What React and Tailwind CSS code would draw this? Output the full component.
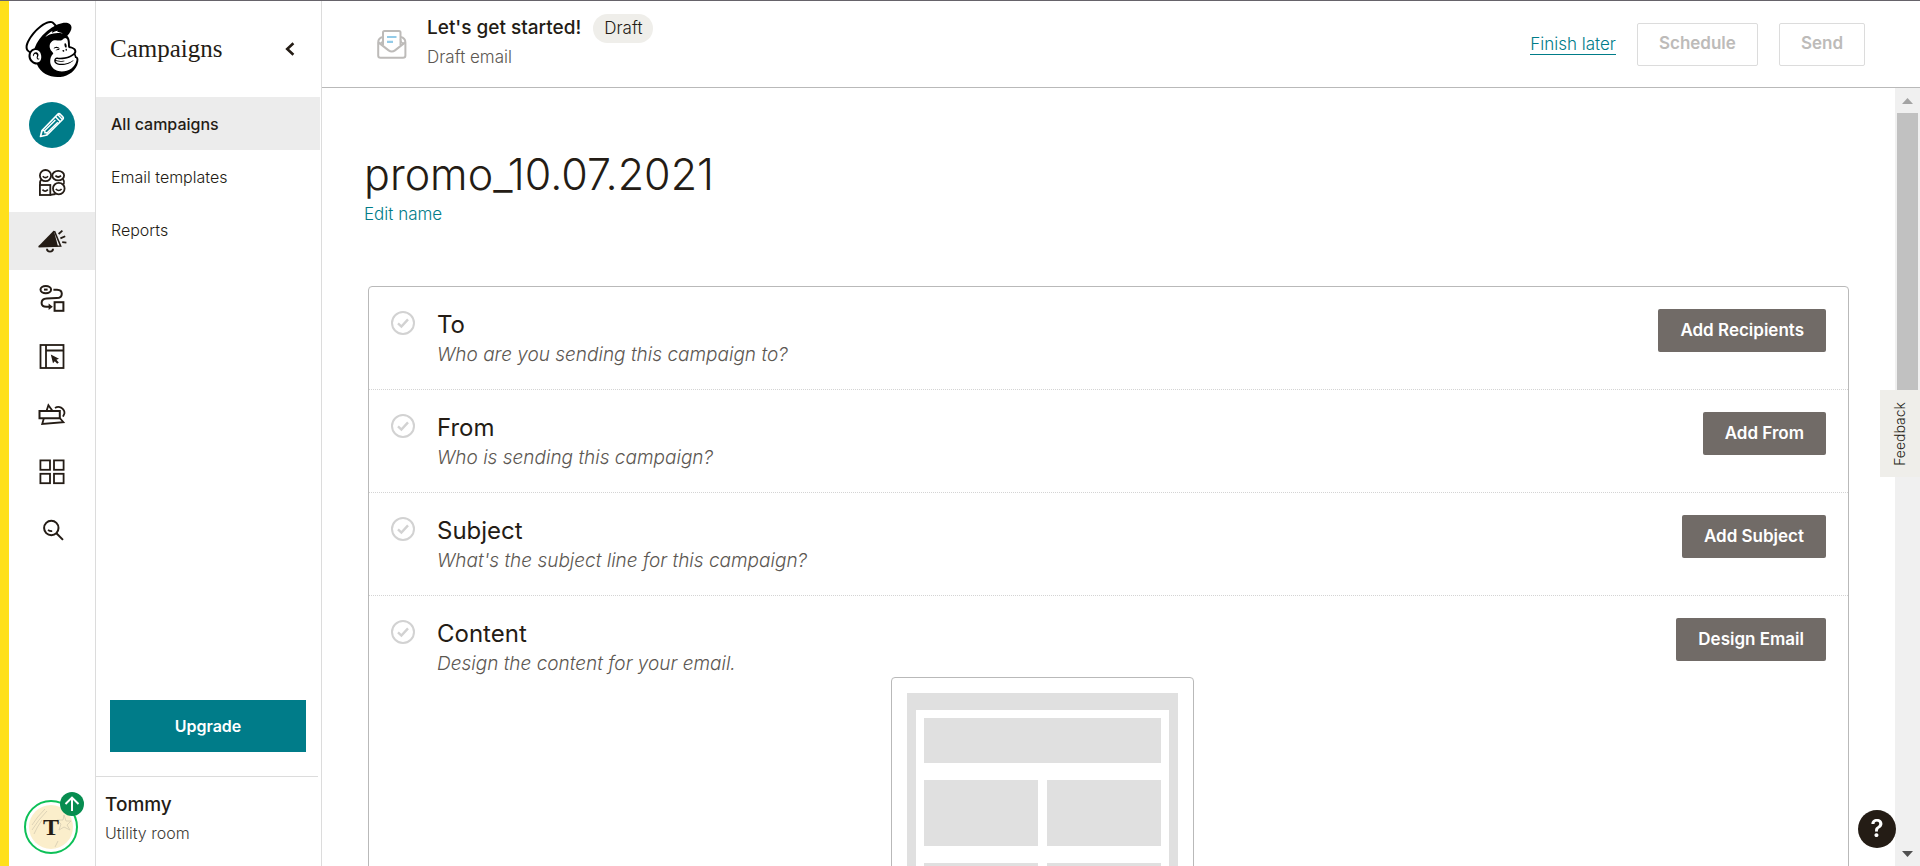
import React from 'react';
import { FaMailchimp } from 'react-icons/fa';

const NAV_LINKS = [
  { label: 'All campaigns', active: true },
  { label: 'Email templates' },
  { label: 'Reports' },
];

const STEPS = [
  { title: 'To',      hint: 'Who are you sending this campaign to?',      action: 'Add Recipients' },
  { title: 'From',    hint: 'Who is sending this campaign?',              action: 'Add From' },
  { title: 'Subject', hint: "What's the subject line for this campaign?", action: 'Add Subject' },
  { title: 'Content', hint: 'Design the content for your email.',         action: 'Design Email', preview: true },
];

function Icon({ children, size = 30, className = '' }) {
  return (
    <svg
      width={size}
      height={size}
      viewBox="0 0 30 30"
      fill="none"
      stroke="currentColor"
      strokeWidth="1.8"
      className={className}
      aria-hidden="true"
    >
      {children}
    </svg>
  );
}

function PencilIcon() {
  return (
    <Icon>
      <path d="M3.5 26.5 L5 20.5 L20.5 4.5 Q22 3 23.5 4.5 L25.5 6.5 Q27 8 25.5 9.5 L10 25 Z" strokeWidth="1.7" strokeLinejoin="round" />
      <path d="M18.5 6.8 L23.3 11.8 M20.6 4.6 L25.4 9.4 M7.8 20.6 L18.4 10 M10.2 22.8 L20.8 12.2 M5 20.5 L7.8 20.6 L7.9 22.8 L10.2 22.8 L10 25" strokeWidth="1.4" />
    </Icon>
  );
}

function AudienceIcon() {
  return (
    <Icon>
      <circle cx="8.5" cy="7.6" r="5.6" />
      <ellipse cx="21.2" cy="7.6" rx="5.9" ry="4.8" />
      <rect x="2.9" y="17" width="10.4" height="10" />
      <circle cx="21.8" cy="20.6" r="5.8" />
      <path d="M3.2 16.6 Q2.4 13.2 4.4 11.6 M26 11 Q27.6 13.2 26.8 16.2 M13.4 26.8 L18.6 26" />
      <path d="M5.8 8.2 Q8.5 11.2 11 8.2 M18.4 7.6 Q21.2 10.4 24 7.6 M5.4 21.6 Q8.2 24.6 10.8 21.6 M18.8 21 Q21.8 24 24.6 21" strokeWidth="1.7" />
    </Icon>
  );
}

function MegaphoneIcon() {
  return (
    <Icon>
      <path d="M1.2 20.6 L16.8 4.4 L21 20.6 Z" fill="currentColor" stroke="none" />
      <path d="M17.4 5 L23.6 20 L1.6 20.6" strokeWidth="1.6" />
      <path d="M10 22.8 Q10 25.6 13 25.6 Q16 25.6 16 22.8" strokeWidth="1.9" />
      <path d="M21.6 8 L25.4 4.6 M23.4 12.4 L28.2 10.2 M25.2 16.2 L29.4 16.6" />
    </Icon>
  );
}

function JourneyIcon() {
  return (
    <Icon>
      <ellipse cx="8.8" cy="5.6" rx="5.3" ry="3.7" strokeWidth="2" />
      <path d="M7 5.6 L10.6 5.6" strokeWidth="2" />
      <path d="M16.4 5.7 H20 Q24.8 5.9 24.8 9.7 Q24.8 13.9 19.6 14.1 L9.6 14.5 Q4.6 14.9 4.6 18.9 Q4.6 22.9 9.6 22.7 L13 22.7" strokeWidth="2" />
      <path d="M11.6 19.4 L15.8 22.7 L11.6 26 Z" fill="currentColor" stroke="none" />
      <rect x="17.6" y="18.2" width="8.8" height="8.6" strokeWidth="2" />
    </Icon>
  );
}

function WebsiteIcon() {
  return (
    <Icon>
      <rect x="3.5" y="3" width="23" height="23" />
      <path d="M9 3 V26 M9 8.5 H26.5" />
      <path d="M13.8 12.4 L22 16.8 L19.4 17.8 L21.8 20.6 L20.2 21.8 L17.8 19.2 L16 21.2 Z" fill="currentColor" stroke="none" />
    </Icon>
  );
}

function ContentIcon() {
  return (
    <Icon>
      <path d="M2.5 11 H22.8 V18.2 H2.5 Z" strokeWidth="2" />
      <path d="M9.6 10.8 L11.4 5.2 L15.4 10.8 M6.8 18.4 L5.2 24 L26.4 22.2 L22.8 18" />
      <path d="M18 8 Q21 6 24 7.6 Q28 10.2 27.4 13.6 L26 16.6" />
    </Icon>
  );
}

function IntegrationsIcon() {
  return (
    <Icon>
      <rect x="3.4" y="2.4" width="9.6" height="9.4" />
      <rect x="17" y="2.4" width="9.6" height="9.4" />
      <rect x="3.4" y="15.8" width="9.6" height="9.4" />
      <rect x="17" y="15.8" width="9.6" height="9.4" />
    </Icon>
  );
}

function SearchIcon() {
  return (
    <Icon>
      <circle cx="14.3" cy="12" r="7.2" strokeWidth="2" />
      <path d="M19.4 17.3 L26 23.9" strokeWidth="2" />
      <path d="M11 14.1 Q12.8 15.3 15.2 15.1" />
    </Icon>
  );
}

const RAIL_ITEMS = [
  { label: 'Audience',     Icon: AudienceIcon },
  { label: 'Campaigns',    Icon: MegaphoneIcon, active: true },
  { label: 'Automations',  Icon: JourneyIcon },
  { label: 'Website',      Icon: WebsiteIcon },
  { label: 'Content',      Icon: ContentIcon },
  { label: 'Integrations', Icon: IntegrationsIcon },
  { label: 'Search',       Icon: SearchIcon },
];

function EmailIcon() {
  return (
    <svg width="30" height="30" viewBox="0 0 30 30" fill="none" stroke="#bdbbb9" strokeWidth="2" strokeLinejoin="round" aria-hidden="true">
      <path d="M6 16 V3.5 Q6 2 7.5 2 H22 Q23.5 2 23.5 3.5 V16" />
      <path d="M6 8 Q1.2 9 1.2 13.4 V26.5 Q1.2 28.8 3.5 28.8 H26 Q28.4 28.8 28.4 26.5 V13.4 Q28.4 9 23.5 8" />
      <path d="M1.4 13.4 L11.6 21.4 Q14.8 23.8 18 21.4 L28.2 13.4" />
      <path d="M2 14.6 Q6 14.4 6 10 M27.6 14.6 Q23.5 14.4 23.5 10" strokeWidth="1.5" />
      <path d="M10 8 H19.5 M10 12.8 H16" stroke="#93cbe8" strokeWidth="2.2" />
    </svg>
  );
}

function Avatar() {
  return (
    <button aria-label="Account" className="relative flex size-[54px] items-center justify-center rounded-full border-2 border-[#0dc057] bg-white">
      <svg width="44" height="44" viewBox="0 0 44 44" aria-hidden="true">
        <circle cx="22" cy="22" r="22" fill="#fbeecb" />
        <g fill="none" stroke="#d9cfb4" strokeWidth="0.9">
          <path d="M3 20 Q8 12 16 4 M3 25 Q9 15 18 6 M5 29 Q8 22 13 15" />
          <path d="M35 10 L37 16 L42 16 L38 20 L41 25 L35 22 L30 25 L32 19 L28 15 L34 15 Z" />
          <path d="M26 42 L29 36" />
        </g>
      </svg>
      <span className="absolute font-['Liberation_Serif',serif] text-2xl font-bold text-[#241c15]">T</span>
      <span className="absolute -top-2.5 -right-2 flex size-6 items-center justify-center rounded-full bg-[#078d50]">
        <svg width="16" height="16" viewBox="0 0 16 16" fill="none" stroke="#fff" strokeWidth="2" aria-hidden="true">
          <path d="M8 15 V2 M1.5 8 L8 1.6 L14.5 8" />
        </svg>
      </span>
    </button>
  );
}

function Rail() {
  return (
    <nav aria-label="Main" className="flex w-[87px] shrink-0 flex-col items-center border-r border-[#dcdcdc]">
      <a href="#home" aria-label="Home" className="flex h-[95px] items-center">
        <FaMailchimp size={64} className="text-black" />
      </a>
      <div className="flex h-[58px] items-center">
        <button aria-label="Create" className="flex size-[46px] items-center justify-center rounded-full bg-[#007c89] text-white">
          <PencilIcon />
        </button>
      </div>
      {RAIL_ITEMS.map(({ label, Icon: ItemIcon, active }) => (
        <a
          key={label}
          href="#nav"
          aria-label={label}
          className={`flex h-[58px] w-full items-center justify-center ${active ? 'bg-[#ececec]' : ''}`}
        >
          <ItemIcon />
        </a>
      ))}
      <div className="mt-auto mr-0.5 mb-3">
        <Avatar />
      </div>
    </nav>
  );
}

function Sidebar() {
  return (
    <aside className="flex w-[226px] shrink-0 flex-col border-r border-[#dcdcdc]">
      <div className="flex h-[96px] items-center justify-between pr-[22px] pl-[14px]">
        <h2 className="font-['Liberation_Serif',serif] text-[25px]">Campaigns</h2>
        <button aria-label="Collapse menu" className="p-1">
          <svg width="10" height="14" viewBox="0 0 10 14" fill="none" stroke="currentColor" strokeWidth="2.6" aria-hidden="true">
            <path d="M8.4 1.2 L2.2 7 L8.4 12.8" />
          </svg>
        </button>
      </div>
      {NAV_LINKS.map(link => (
        <a
          key={link.label}
          href="#section"
          className={`mr-px flex h-[53px] items-center pl-[15px] text-base ${link.active ? 'bg-[#ececec] font-medium' : 'font-light'}`}
        >
          {link.label}
        </a>
      ))}
      <div className="mt-auto pr-[15px] pb-6 pl-[14px]">
        <button className="h-[52px] w-full bg-[#007c89] text-base font-semibold text-white">Upgrade</button>
      </div>
      <div className="mr-[3px] h-[90px] border-t border-[#dcdcdc] pt-3.5 pl-[9px]">
        <p className="text-[19px] leading-7 font-medium">Tommy</p>
        <p className="text-base leading-7 font-light text-[#403b36]">Utility room</p>
      </div>
    </aside>
  );
}

function Header() {
  return (
    <header className="flex h-[87px] shrink-0 items-center border-b border-[#b9b9b9] pr-[55px] pl-[55px]">
      <EmailIcon />
      <div className="ml-5 pb-1">
        <div className="flex items-center gap-3">
          <h1 className="text-[19px] font-medium">Let's get started!</h1>
          <span className="rounded-full bg-[#efeeea] px-[11px] py-1 text-[17px] leading-[21px] font-light">Draft</span>
        </div>
        <p className="text-[17px] leading-7 font-light text-[#5c5752]">Draft email</p>
      </div>
      <div className="ml-auto flex items-center gap-[21px]">
        <a href="#later" className="border-b border-[#007c89] text-[17px] leading-5 font-light text-[#007c89]">Finish later</a>
        <button disabled className="h-[43px] rounded-xs border border-[#dcdcdc] px-[21px] text-[17px] font-semibold text-[#bdbbb9]">Schedule</button>
        <button disabled className="h-[43px] rounded-xs border border-[#dcdcdc] px-[21px] text-[17px] font-semibold text-[#bdbbb9]">Send</button>
      </div>
    </header>
  );
}

function EmailPreview() {
  return (
    <div className="mx-auto w-[303px] rounded border border-[#b9b9b9] p-[15px]">
      <div className="bg-[#e0e0e0] px-[9px] pt-[17px]">
        <div className="grid grid-cols-2 gap-x-[9px] gap-y-[17px] bg-white p-2">
          <div className="col-span-2 h-[45px] bg-[#e0e0e0]" />
          <div className="h-[66px] bg-[#e0e0e0]" />
          <div className="h-[66px] bg-[#e0e0e0]" />
          <div className="h-[66px] bg-[#e0e0e0]" />
          <div className="h-[66px] bg-[#e0e0e0]" />
        </div>
      </div>
    </div>
  );
}

function Step({ step }) {
  return (
    <li className="flex min-h-[103px] border-b border-dotted border-[#d4d4d4] px-[22px] last:border-b-0">
      <svg width="24" height="24" viewBox="0 0 24 24" fill="none" stroke="#d2d2d2" strokeWidth="2" className="mt-6 shrink-0" aria-hidden="true">
        <circle cx="12" cy="12" r="11" />
        <path d="M7 12.4 L10.4 15.6 L17 8.4" strokeWidth="2.4" />
      </svg>
      <div className="ml-[22px] min-w-0 flex-1 pt-[22px]">
        <h3 className="text-2xl leading-8">{step.title}</h3>
        <p className="text-[19px] leading-[27px] font-light text-[#5c5752] italic">{step.hint}</p>
        {step.preview && <EmailPreview />}
      </div>
      <div className="w-[179px] shrink-0 pt-[22px] text-right">
        <button className="h-[43px] rounded-xs bg-[#716b67] px-[22px] text-[17px] font-semibold text-white">{step.action}</button>
      </div>
    </li>
  );
}

function ScrollTrack() {
  return (
    <div className="flex w-[25px] shrink-0 flex-col items-center bg-[#f0f0f0]" aria-hidden="true">
      <svg width="11" height="25" viewBox="0 0 11 25" fill="#a3a3a3">
        <path d="M0 16 L5.5 10 L11 16 Z" />
      </svg>
      <div className="h-[300px] w-[21px] bg-[#c1c1c1]" />
      <svg width="11" height="25" viewBox="0 0 11 25" fill="#505050" className="mt-auto">
        <path d="M0 10 L5.5 16 L11 10 Z" />
      </svg>
    </div>
  );
}

export default function App() {
  return (
    <div className="flex h-screen overflow-hidden border-t border-[#66636a] bg-white font-[Inter,'Liberation_Sans',sans-serif] text-[#241c15]">
      <div className="w-[9px] shrink-0 bg-[#ffe01b]" />
      <Rail />
      <Sidebar />
      <div className="flex min-w-0 flex-1 flex-col">
        <Header />
        <div className="flex min-h-0 flex-1">
          <main className="min-w-0 flex-1 overflow-hidden px-[46px] pt-[60px]">
            <h2 className="-ml-1 text-[43px] leading-[52px] font-light">promo_10.07.2021</h2>
            <a href="#rename" className="-ml-1 text-[17px] leading-7 font-light text-[#007c89]">Edit name</a>
            <ol className="mt-[58px] rounded border border-[#b9b9b9]">
              {STEPS.map(step => <Step key={step.title} step={step} />)}
            </ol>
          </main>
          <ScrollTrack />
        </div>
      </div>

      {/* Floating controls */}
      <button className="fixed top-[390px] right-0 flex h-[87px] w-10 items-center justify-center bg-[#efeeea] text-sm font-light">
        <span className="rotate-180 [writing-mode:vertical-rl]">Feedback</span>
      </button>
      <button aria-label="Help" className="fixed right-6 bottom-[18px] flex size-[38px] items-center justify-center rounded-full bg-[#241c15] text-2xl font-semibold text-white">?</button>
    </div>
  );
}
